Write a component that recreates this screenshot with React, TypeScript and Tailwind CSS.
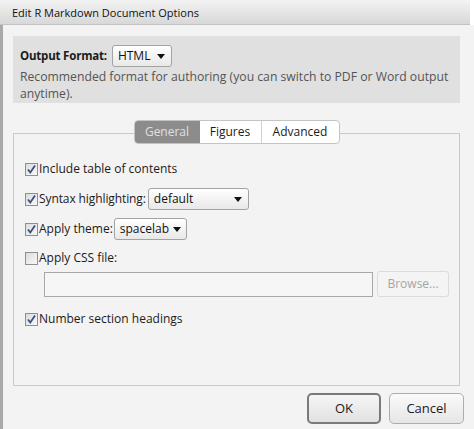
import React from "react";

const font = { fontFamily: '"Open Sans", "Noto Sans", "Liberation Sans", sans-serif' };

function Check({ checked }: { checked: boolean }) {
  return (
    <span className="inline-flex w-[13px] h-[13px] border border-[#8f8f8f] bg-gradient-to-br from-[#dcdcdc] to-[#f8f8f8] items-center justify-center shrink-0">
      {checked && (
        <svg width="11" height="11" viewBox="0 0 11 11">
          <path d="M2 5.5 L4.3 8.5 L9 1.5" stroke="#3b4f87" strokeWidth="1.8" fill="none" />
        </svg>
      )}
    </span>
  );
}

function Drop({ label, w }: { label: string; w: string }) {
  return (
    <div
      className={`${w} h-[22px] flex items-center justify-between pl-[5px] pr-[6px] border border-[#a3a3a3] rounded-[3px] bg-gradient-to-b from-[#ffffff] to-[#e8e8e8] text-[12px] text-[#111]`}
    >
      <span>{label}</span>
      <svg width="8" height="5" viewBox="0 0 8 5" className="shrink-0 ml-[4px]">
        <path d="M0 0 L8 0 L4 5 Z" fill="#111" />
      </svg>
    </div>
  );
}

export default function App() {
  return (
    <div className="w-[474px] h-[429px] flex flex-col bg-white text-[#1b1b1b] text-[12px]" style={font}>
      <div className="h-[25px] w-[470px] flex items-center pl-[12px] pt-[2px] bg-gradient-to-b from-[#f3f3f3] to-[#d8d8d8] border-b border-[#c2c2c2] text-[11px] text-[#111]">
        Edit R Markdown Document Options
      </div>
      <div className="flex-1 flex flex-col bg-[#f3f3f3] border-l-[3px] border-[#a9a9a9] pl-[10px] pr-[12px] pt-[11px]">
        <div className="w-[447px] h-[67px] bg-[#e0e0e0] px-[7px] pt-[9px]">
          <div className="flex items-center gap-[5px]">
            <span className="font-bold text-[11.5px] tracking-[-0.2px]">Output Format:</span>
            <Drop label="HTML" w="w-[60px]" />
          </div>
          <div className="text-[#555] leading-[17px] mt-[1px] text-[12.2px]">
            Recommended format for authoring (you can switch to PDF or Word output anytime).
          </div>
        </div>
        <div className="flex justify-center w-[447px] mt-[17px] relative z-10">
          <div className="flex h-[24px] rounded-[4px] border border-[#c4c4c4] bg-white overflow-hidden">
            <div className="w-[65px] flex items-center justify-center bg-[#8c8c8c] text-[#e0e0e0]">General</div>
            <div className="w-[62px] flex items-center justify-center border-r border-[#d0d0d0]">Figures</div>
            <div className="w-[77px] flex items-center justify-center">Advanced</div>
          </div>
        </div>
        <div className="w-[447px] h-[253px] -mt-[11px] border border-[#c9c9c9] pl-[11px] pr-[10px] pt-[27px] flex flex-col">
          <label className="flex items-center gap-[1px] h-[16px]">
            <Check checked />
            <span>Include table of contents</span>
          </label>
          <div className="flex items-center gap-[2px] mt-[11px] h-[22px]">
            <label className="flex items-center gap-[1px]">
              <Check checked />
              <span className="tracking-[-0.1px]">Syntax highlighting:</span>
            </label>
            <Drop label="default" w="w-[101px]" />
          </div>
          <div className="flex items-center gap-[1px] mt-[8px] h-[22px]">
            <label className="flex items-center gap-[1px]">
              <Check checked />
              <span>Apply theme:</span>
            </label>
            <Drop label="spacelab" w="w-[73px]" />
          </div>
          <label className="flex items-center gap-[1px] mt-[10px] h-[16px]">
            <Check checked={false} />
            <span>Apply CSS file:</span>
          </label>
          <div className="flex items-center gap-[4px] mt-[5px] pl-[19px]">
            <div className="w-[329px] h-[25px] border border-[#a8a8a8] bg-[#f6f6f6]" />
            <div className="w-[72px] h-[26px] flex items-center justify-center border border-[#dcdcdc] rounded-[3px] bg-[#f4f4f4] text-[#a5a5a5]">
              Browse...
            </div>
          </div>
          <label className="flex items-center gap-[1px] mt-[14px] h-[16px]">
            <Check checked />
            <span>Number section headings</span>
          </label>
        </div>
        <div className="flex justify-end gap-[8px] mt-[7px] w-[451px]">
          <div className="w-[74px] h-[31px] flex items-center justify-center rounded-[5px] border-2 border-[#7a7a7a] bg-gradient-to-b from-[#f6f6f6] to-[#e1e1e1] text-[13px]">
            OK
          </div>
          <div className="w-[75px] h-[31px] flex items-center justify-center rounded-[5px] border border-[#adadad] bg-gradient-to-b from-[#fafafa] to-[#e6e6e6] text-[13px]">
            Cancel
          </div>
        </div>
      </div>
    </div>
  );
}
